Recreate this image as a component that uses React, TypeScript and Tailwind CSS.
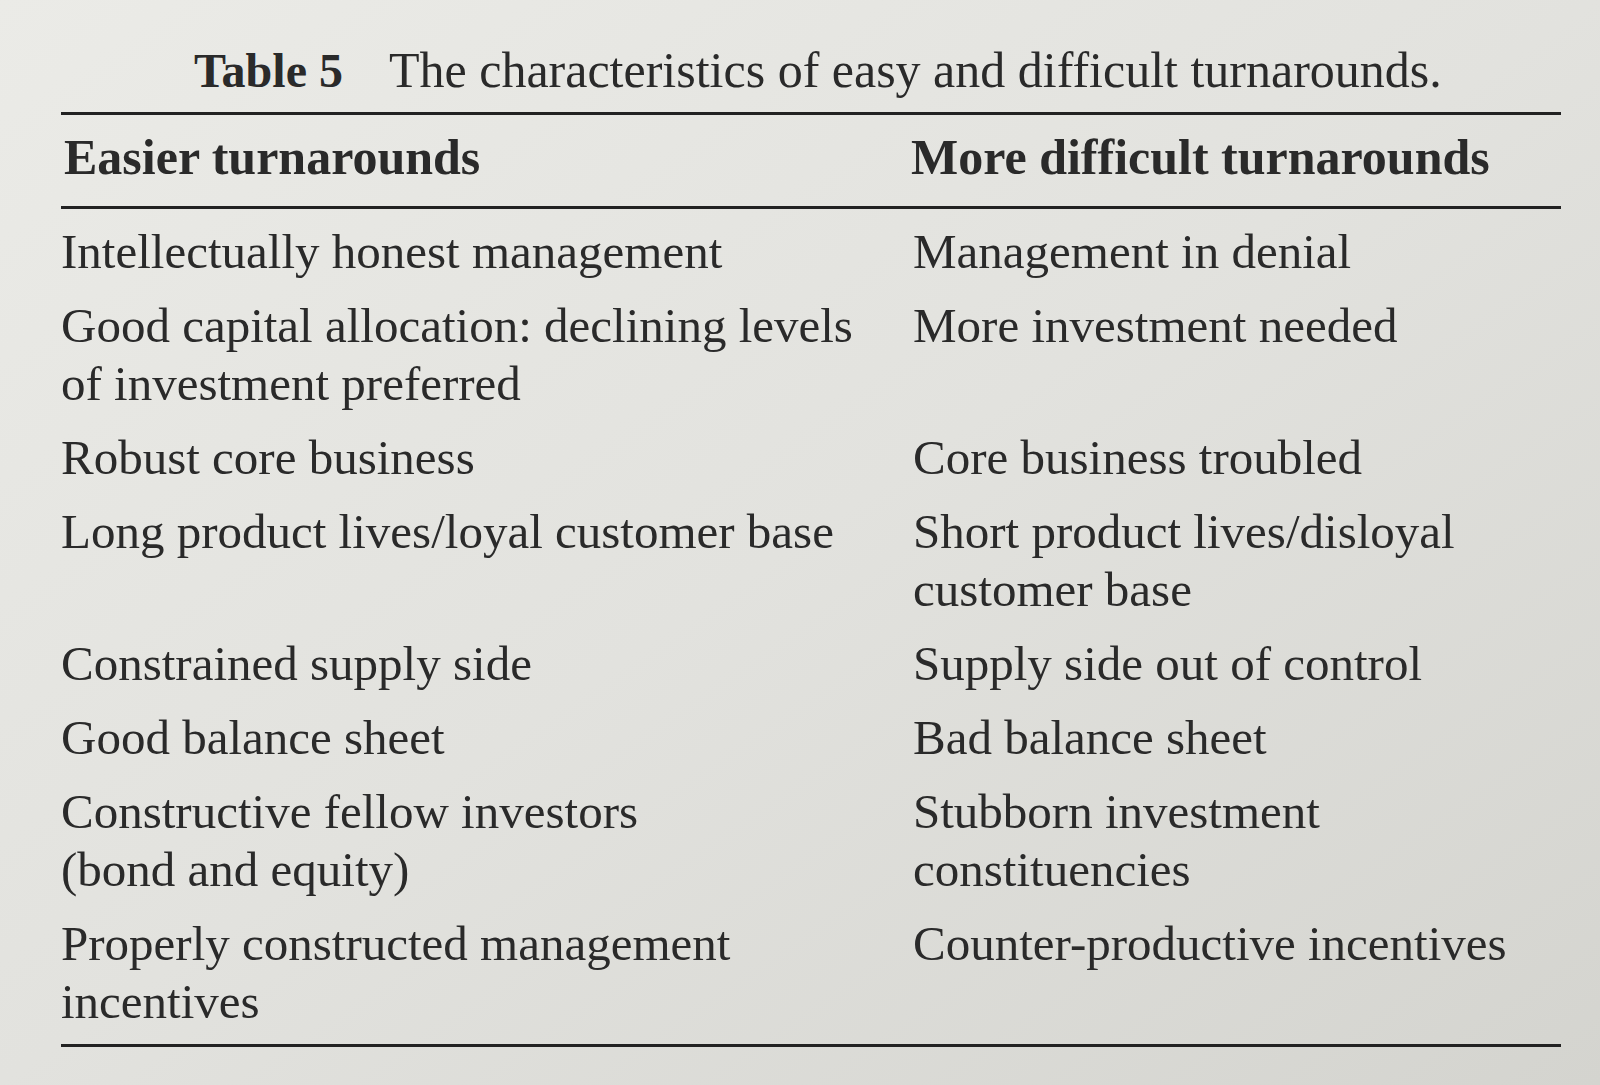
const rows: { easy: string[]; hard: string[] }[] = [
  { easy: ['Intellectually honest management'], hard: ['Management in denial'] },
  { easy: ['Good capital allocation: declining levels', 'of investment preferred'], hard: ['More investment needed'] },
  { easy: ['Robust core business'], hard: ['Core business troubled'] },
  { easy: ['Long product lives/loyal customer base'], hard: ['Short product lives/disloyal', 'customer base'] },
  { easy: ['Constrained supply side'], hard: ['Supply side out of control'] },
  { easy: ['Good balance sheet'], hard: ['Bad balance sheet'] },
  { easy: ['Constructive fellow investors', '(bond and equity)'], hard: ['Stubborn investment', 'constituencies'] },
  { easy: ['Properly constructed management', 'incentives'], hard: ['Counter-productive incentives'] },
];

export default function App() {
  return (
    <div
      className="w-[1600px] h-[1085px] overflow-hidden bg-gradient-to-br from-[#ebebe7] via-[#e2e2de] to-[#d4d4cf] text-[#2a2a2a]"
      style={{ fontFamily: "'Liberation Serif', 'Times New Roman', serif" }}
    >
      <div className="ml-[61px] w-[1500px] pt-[42px]">
        {/* Caption */}
        <div className="flex items-baseline pl-[133px] leading-[57px] whitespace-nowrap">
          <span className="font-bold text-[48px]">Table 5</span>
          <span className="ml-[46px] text-[50px]">The characteristics of easy and difficult turnarounds.</span>
        </div>

        <div className="mt-[13px] h-[3px] bg-[#222]" />

        {/* Header */}
        <div className="flex pt-[14px] pb-[20px] text-[50px] leading-[57px] font-bold whitespace-nowrap">
          <div className="w-[850px] pl-[3px]">Easier turnarounds</div>
          <div className="flex-1">More difficult turnarounds</div>
        </div>

        <div className="h-[3px] bg-[#222]" />

        {/* Body */}
        <div className="flex flex-col gap-[16px] pt-[14px] pb-[13px] text-[49px] leading-[58px] whitespace-nowrap">
          {rows.map((r, i) => (
            <div key={i} className="flex">
              <div className="w-[850px]">
                {r.easy.map((l, j) => (
                  <div key={j}>{l}</div>
                ))}
              </div>
              <div className="flex-1 pl-[2px]">
                {r.hard.map((l, j) => (
                  <div key={j}>{l}</div>
                ))}
              </div>
            </div>
          ))}
        </div>

        <div className="h-[3px] bg-[#222]" />
      </div>
    </div>
  );
}
